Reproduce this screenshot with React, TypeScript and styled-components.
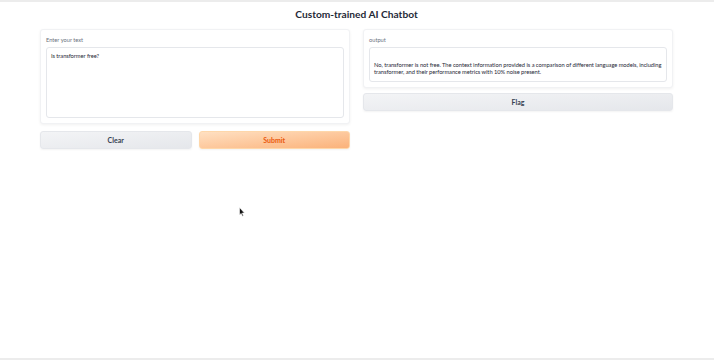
import React from "react";
import styled, { createGlobalStyle } from "styled-components";

const GlobalStyle = createGlobalStyle`
  html, body {
    margin: 0;
    padding: 0;
    background: #ffffff;
  }
  body {
    font-family: "Lato", "Noto Sans", sans-serif;
    color: #1f2937;
  }
`;

const Page = styled.div`
  position: relative;
  box-sizing: border-box;
  height: 360px;
  border-top: 2px solid #ececec;
  border-bottom: 2px solid #ececec;
  padding: 0 41px 0 40px;
`;

const Title = styled.h1`
  box-sizing: border-box;
  margin: 0;
  height: 27px;
  padding-bottom: 3px;
  display: flex;
  align-items: center;
  justify-content: center;
  font-size: 10.2px;
  font-weight: 700;
  color: #1f2937;
`;

const Columns = styled.div`
  display: grid;
  grid-template-columns: 1fr 1fr;
  gap: 13px;
  align-items: start;
`;

const Column = styled.div<{ $gap: number }>`
  display: flex;
  flex-direction: column;
  gap: ${(p) => p.$gap}px;
`;

const Panel = styled.div`
  box-sizing: border-box;
  background: #ffffff;
  border: 1px solid #f1f2f4;
  border-radius: 3px;
  box-shadow: 0 1px 3px rgba(0, 0, 0, 0.06);
  padding: 6px 5px 5px 5px;
`;

const Label = styled.div`
  font-size: 5.7px;
  line-height: 8px;
  color: #6b7280;
  margin-bottom: 3px;
`;

const Field = styled.div<{ $height: number; $padTop: number }>`
  box-sizing: border-box;
  height: ${(p) => p.$height}px;
  border: 1px solid #e5e7eb;
  border-radius: 3px;
  padding: ${(p) => p.$padTop}px 4px 0 4px;
  font-size: 5.75px;
  letter-spacing: -0.05px;
  line-height: 7px;
  color: #1f2937;
  background: #ffffff;
`;

const ButtonRow = styled.div`
  display: grid;
  grid-template-columns: 1fr 1fr;
  gap: 7px;
`;

const Button = styled.button<{ $primary?: boolean }>`
  height: 18px;
  border: 1px solid ${(p) => (p.$primary ? "#fed7aa" : "#e5e7eb")};
  border-radius: 3px;
  font-family: "Lato", "Noto Sans", sans-serif;
  font-size: 7px;
  font-weight: 700;
  padding: 0;
  color: ${(p) => (p.$primary ? "#ea580c" : "#374151")};
  background: ${(p) =>
    p.$primary
      ? "linear-gradient(to bottom right, #ffe0c2, #fbb27a)"
      : "linear-gradient(to bottom right, #f3f4f6, #e5e7eb)"};
  box-shadow: 0 1px 2px rgba(0, 0, 0, 0.05);
`;

const Cursor = styled.svg`
  position: absolute;
  left: 239px;
  top: 205px;
`;

export default function App() {
  return (
    <Page>
      <GlobalStyle />
      <Title>Custom-trained AI Chatbot</Title>
      <Columns>
        <Column $gap={7}>
          <Panel>
            <Label>Enter your text</Label>
            <Field $height={71} $padTop={4}>
              Is transformer free?
            </Field>
          </Panel>
          <ButtonRow>
            <Button>Clear</Button>
            <Button $primary>Submit</Button>
          </ButtonRow>
        </Column>
        <Column $gap={5}>
          <Panel>
            <Label>output</Label>
            <Field $height={35} $padTop={13}>
              No, transformer is not free. The context information provided is a comparison of different
              language models, including transformer, and their performance metrics with 10% noise present.
            </Field>
          </Panel>
          <Button>Flag</Button>
        </Column>
      </Columns>
      <Cursor width="6" height="10" viewBox="0 0 6 10">
        <path d="M0.5 0.5 L0.5 8 L2.2 6.4 L3.4 9.2 L4.4 8.8 L3.3 6.1 L5.5 6.1 Z" fill="#111" stroke="#fff" strokeWidth="0.6" />
      </Cursor>
    </Page>
  );
}
